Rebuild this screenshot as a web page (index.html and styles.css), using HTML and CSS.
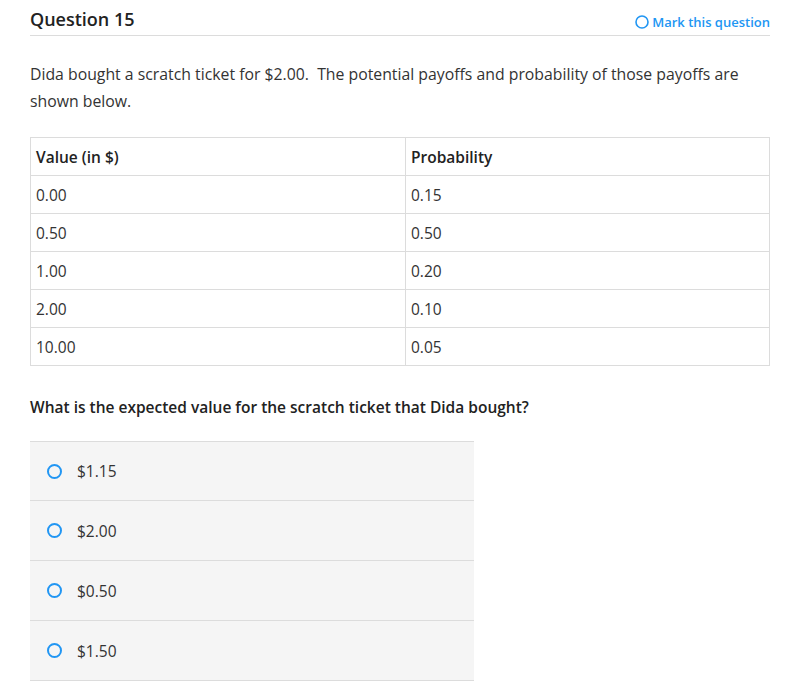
FILE: index.html
```html
<!DOCTYPE html>
<html lang="en">
<head>
    <meta charset="UTF-8">
    <title>Question 15</title>
    <link rel="stylesheet" href="styles.css">
</head>
<body>
    <div class="question">
        <header class="q-header">
            <h1>Question 15</h1>
            <a class="mark" href="#">
                <svg width="14" height="14" viewBox="0 0 14 14"><circle cx="7" cy="7" r="6" fill="none" stroke="#2196f3" stroke-width="1.6"/></svg>
                Mark this question
            </a>
        </header>

        <p class="stem">Dida bought a scratch ticket for $2.00.&nbsp; The potential payoffs and probability of those payoffs are shown below.</p>

        <table class="values">
            <colgroup><col class="col-value"><col></colgroup>
            <tr><th>Value (in $)</th><th>Probability</th></tr>
            <tr><td>0.00</td><td>0.15</td></tr>
            <tr><td>0.50</td><td>0.50</td></tr>
            <tr><td>1.00</td><td>0.20</td></tr>
            <tr><td>2.00</td><td>0.10</td></tr>
            <tr><td>10.00</td><td>0.05</td></tr>
        </table>

        <p class="prompt">What is the expected value for the scratch ticket that Dida bought?</p>

        <ul class="answers">
            <li><span class="radio"></span>$1.15</li>
            <li><span class="radio"></span>$2.00</li>
            <li><span class="radio"></span>$0.50</li>
            <li><span class="radio"></span>$1.50</li>
        </ul>
    </div>
</body>
</html>
```

FILE: styles.css
```css
body {
    margin: 0;
    font-family: "Open Sans", sans-serif;
    color: #333;
    background: #fff;
}
.question {
    padding: 0 31px 0 30px;
}
.q-header {
    display: flex;
    justify-content: space-between;
    align-items: flex-end;
    border-bottom: 1px solid #dcdcdc;
    height: 35px;
}
.q-header h1 {
    margin: 0 0 4px;
    font-size: 18px;
    font-weight: 600;
    color: #222;
}
.mark {
    display: flex;
    align-items: center;
    gap: 3px;
    color: #2196f3;
    text-decoration: none;
    font-size: 13px;
    font-weight: 600;
    margin-bottom: 4px;
}
.stem {
    margin: 25px 0 0;
    font-size: 15.8px;
    line-height: 27px;
    padding-right: 10px;
}
.values {
    width: 100%;
    margin-top: 22px;
    border-collapse: collapse;
    table-layout: fixed;
    font-size: 15.5px;
}
.col-value {
    width: 375px;
}
.values th, .values td {
    border: 1px solid #dcdcdc;
    height: 37px;
    padding: 0 5px;
    text-align: left;
}
.values th {
    font-weight: 600;
    color: #222;
}
.prompt {
    margin: 30px 0 0;
    font-size: 15.5px;
    font-weight: 600;
    color: #222;
}
.answers {
    list-style: none;
    margin: 23px 0 0;
    padding: 0;
    width: 444px;
}
.answers li {
    display: flex;
    align-items: center;
    height: 59px;
    background: #f5f5f5;
    border-top: 1px solid #dcdcdc;
    padding-left: 17px;
    font-size: 15.5px;
}
.answers li:first-child {
    height: 58px;
}
.answers li:last-child {
    border-bottom: 1px solid #dcdcdc;
}
.radio {
    width: 11px;
    height: 11px;
    border: 2.5px solid #2196f3;
    border-radius: 50%;
    margin-right: 15px;
}
```
